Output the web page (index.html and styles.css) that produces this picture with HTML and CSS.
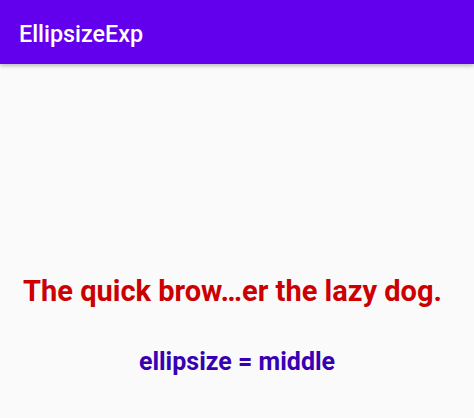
FILE: index.html
```html
<!DOCTYPE html>
<html>
<head>
  <meta charset="utf-8">
  <title>EllipsizeExp</title>
  <link rel="stylesheet" href="styles.css">
</head>
<body>
  <!-- app bar -->
  <div class="appbar">
    <div class="title">EllipsizeExp</div>
  </div>

  <div class="content">
    <div class="sample">The quick brow…er the lazy dog.</div>
    <div class="mode">ellipsize = middle</div>
  </div>
</body>
</html>
```
FILE: styles.css
```css
body {
  margin: 0;
  background-color: #FAFAFA;
  font-family: Roboto, "Liberation Sans", sans-serif;
  height: 418px;
  overflow: hidden;
}

.appbar {
  height: 64px;
  background-color: #6200EE;
  display: flex;
  align-items: center;
  padding-left: 19px;
  box-shadow: 0 2px 4px rgba(0, 0, 0, 0.25);
}

.title {
  color: white;
  font-size: 23.3px;
  font-weight: 500;
  padding-top: 3px;
}

.content {
  display: flex;
  flex-direction: column;
  align-items: center;
  padding-top: 210px;
}

.sample {
  color: #CC0000;
  font-size: 29px;
  font-weight: bold;
  white-space: nowrap;
  margin-right: 9px;
}

.mode {
  color: #3700B3;
  font-size: 25px;
  font-weight: bold;
  margin-top: 39px;
}
```
